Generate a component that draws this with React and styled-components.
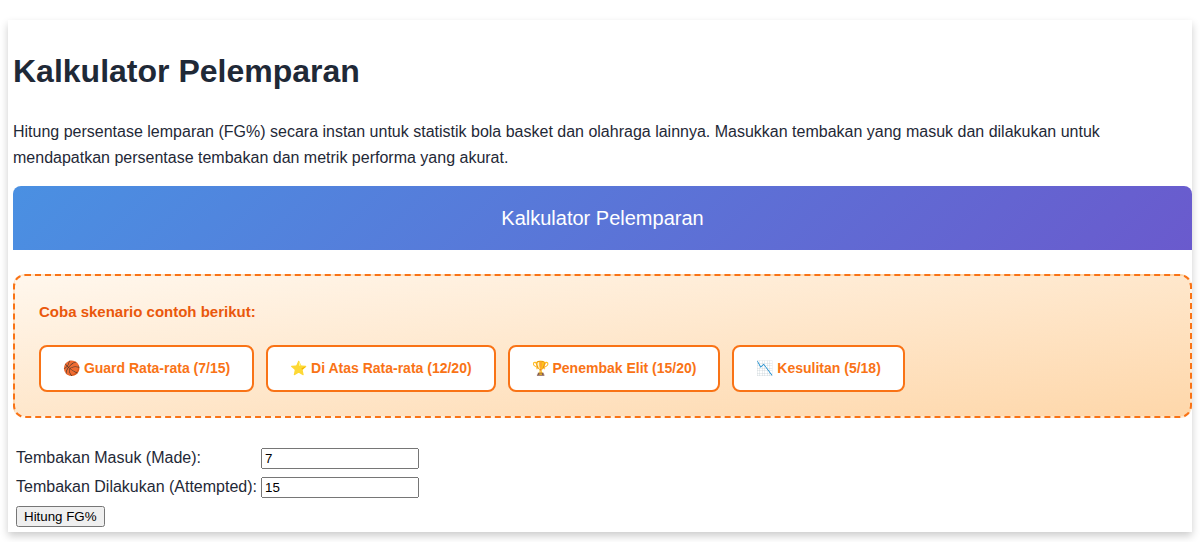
import React, { useState } from 'react';
import styled, { createGlobalStyle } from 'styled-components';

const GlobalStyle = createGlobalStyle`
    body {
        margin: 0;
        padding: 20px 8px 10px;
        color: #1f2937;
        font-family: "Liberation Sans", Arial, sans-serif;
        font-size: 16px;
        line-height: 26px;
    }
`

const Card = styled.main`
    display: flow-root;
    padding: 0 0 1px 5px;
    box-shadow: 0 4px 8px rgba(0, 0, 0, 0.2);
`

const Title = styled.h1`
    margin: 25px 0 22px;
    font-size: 32px;
    line-height: 52px;
`

const Intro = styled.p`
    margin: 0 0 15px;
`

const Banner = styled.div`
    padding: 16px;
    border-radius: 8px 8px 0 0;
    background: linear-gradient(135deg, #4a90e2, #6a5acd);
    color: #fff;
    font-size: 20px;
    line-height: 32px;
    text-align: center;
`

const Examples = styled.section`
    margin: 24px 0;
    padding: 24px;
    border: 2px dashed #f97316;
    border-radius: 12px;
    background: linear-gradient(to bottom right, #fff7ed, #fed7aa);
`

const ExamplesTitle = styled.h2`
    margin: 0 0 21px;
    color: #ea580c;
    font-size: 15px;
    line-height: 24px;
`

const ExampleList = styled.div`
    display: flex;
    flex-wrap: wrap;
    gap: 12px;
`

const ExampleButton = styled.button`
    padding: 10px 22px;
    border: 2px solid #f97316;
    border-radius: 8px;
    background: #fff;
    color: #f97316;
    font-family: inherit;
    font-size: 14px;
    font-weight: 600;
    line-height: 23px;
    cursor: pointer;
`

const FormTable = styled.table`
    border-spacing: 2px;
    line-height: 25px;

    td {
        padding: 1px;
    }
`

const NumberInput = styled.input`
    width: 150px;
`

const scenarios = [
    { icon: '🏀', name: 'Guard Rata-rata', made: '7', attempted: '15' },
    { icon: '⭐', name: 'Di Atas Rata-rata', made: '12', attempted: '20' },
    { icon: '🏆', name: 'Penembak Elit', made: '15', attempted: '20' },
    { icon: '📉', name: 'Kesulitan', made: '5', attempted: '18' },
];

function App() {
    const [made, setMade] = useState('7');
    const [attempted, setAttempted] = useState('15');

    const pick = (item) => {
        setMade(item.made);
        setAttempted(item.attempted);
    };

    return (
        <>
            <GlobalStyle />
            <Card>
                <Title>Kalkulator Pelemparan</Title>
                <Intro>
                    Hitung persentase lemparan (FG%) secara instan untuk statistik bola basket dan olahraga lainnya. Masukkan tembakan yang masuk dan dilakukan untuk mendapatkan persentase tembakan dan metrik performa yang akurat.
                </Intro>
                <Banner>Kalkulator Pelemparan</Banner>
                <Examples>
                    <ExamplesTitle>Coba skenario contoh berikut:</ExamplesTitle>
                    <ExampleList>
                        {scenarios.map((item) => (
                            <ExampleButton key={item.name} type="button" onClick={() => pick(item)}>
                                {`${item.icon} ${item.name} (${item.made}/${item.attempted})`}
                            </ExampleButton>
                        ))}
                    </ExampleList>
                </Examples>
                <form onSubmit={(e) => e.preventDefault()}>
                    <FormTable>
                        <tbody>
                            <tr>
                                <td><label htmlFor="made">Tembakan Masuk (Made):</label></td>
                                <td><NumberInput id="made" type="number" value={made} onChange={(e) => setMade(e.target.value)} /></td>
                            </tr>
                            <tr>
                                <td><label htmlFor="attempted">Tembakan Dilakukan (Attempted):</label></td>
                                <td><NumberInput id="attempted" type="number" value={attempted} onChange={(e) => setAttempted(e.target.value)} /></td>
                            </tr>
                            <tr>
                                <td colSpan="2"><button type="submit">Hitung FG%</button></td>
                            </tr>
                        </tbody>
                    </FormTable>
                </form>
            </Card>
        </>
    );
}

export default App;
